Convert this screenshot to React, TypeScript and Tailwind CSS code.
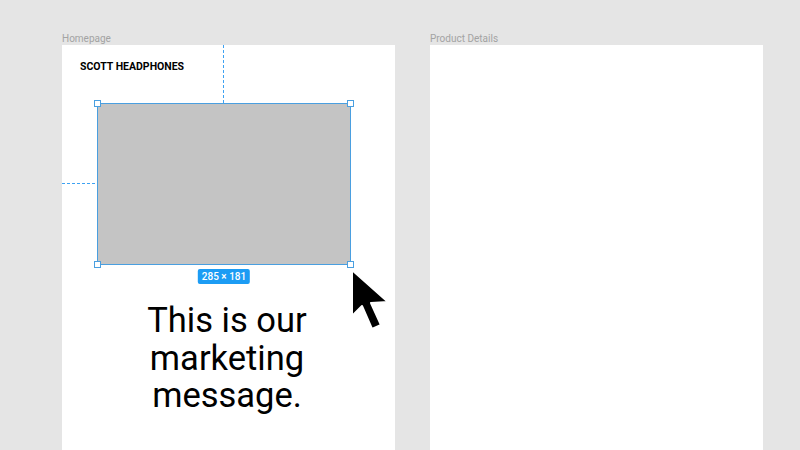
// Design canvas mock: two artboards, one with a selected placeholder image
const font = { fontFamily: "Roboto, 'Noto Sans', sans-serif" };

function Handle({ className }: { className: string }) {
  return (
    <div
      className={`absolute w-[7px] h-[7px] bg-white border border-[#4a9fe0] ${className}`}
    />
  );
}

function Cursor() {
  return (
    <svg
      className="absolute left-[350px] top-[268px]"
      width="42"
      height="68"
      viewBox="0 0 42 68"
    >
      <path
        d="M2 2 L2 48 L12 38 L22 61 L31 57 L21 35 L38 34 Z"
        fill="#000"
        stroke="#fff"
        strokeWidth="2"
        strokeLinejoin="round"
      />
    </svg>
  );
}

export default function App() {
  return (
    <div
      className="relative w-[800px] h-[450px] bg-[#e5e5e5] overflow-hidden"
      style={font}
    >
      <div className="flex gap-[35px] pl-[62px] pt-[32px]">
        {/* ── Homepage artboard ── */}
        <div className="flex flex-col w-[333px]">
          <span className="text-[10px] leading-[13px] text-[#a3a3a3]">Homepage</span>
          <div className="relative h-[420px] bg-white">
            {/* spacing guides shown while dragging */}
            <div className="absolute left-[161px] top-0 h-[58px] w-px bg-[repeating-linear-gradient(to_bottom,#3ea2f2_0_3px,transparent_3px_5px)]" />
            <div className="absolute left-0 top-[138px] w-[35px] h-px bg-[repeating-linear-gradient(to_right,#3ea2f2_0_3px,transparent_3px_5px)]" />

            <h1 className="pt-[16px] pl-[18px] text-[10.5px] leading-[12px] font-bold text-black">
              SCOTT HEADPHONES
            </h1>

            {/* selected image placeholder */}
            <div className="relative ml-[35px] mt-[30px] w-[254px] h-[162px] bg-[#c4c4c4] border-[1.5px] border-[#4a9fe0]">
              <Handle className="-left-[4px] -top-[4px]" />
              <Handle className="-right-[4px] -top-[4px]" />
              <Handle className="-left-[4px] -bottom-[4px]" />
              <Handle className="-right-[4px] -bottom-[4px]" />
              <div className="absolute left-1/2 -translate-x-1/2 top-full mt-[5px] px-[4px] h-[15px] rounded-[2px] bg-[#1c9cf4] text-white text-[10px] leading-[15px] font-medium whitespace-nowrap">
                285 × 181
              </div>
            </div>

            <p className="mt-[37px] pr-[3px] text-center text-[34.5px] leading-[37.5px] text-black">
              This is our
              <br />
              marketing
              <br />
              message.
            </p>
          </div>
        </div>

        {/* ── Product Details artboard ── */}
        <div className="flex flex-col w-[333px]">
          <span className="text-[10px] leading-[13px] text-[#a3a3a3]">Product Details</span>
          <div className="h-[420px] bg-white" />
        </div>
      </div>

      <Cursor />
    </div>
  );
}
